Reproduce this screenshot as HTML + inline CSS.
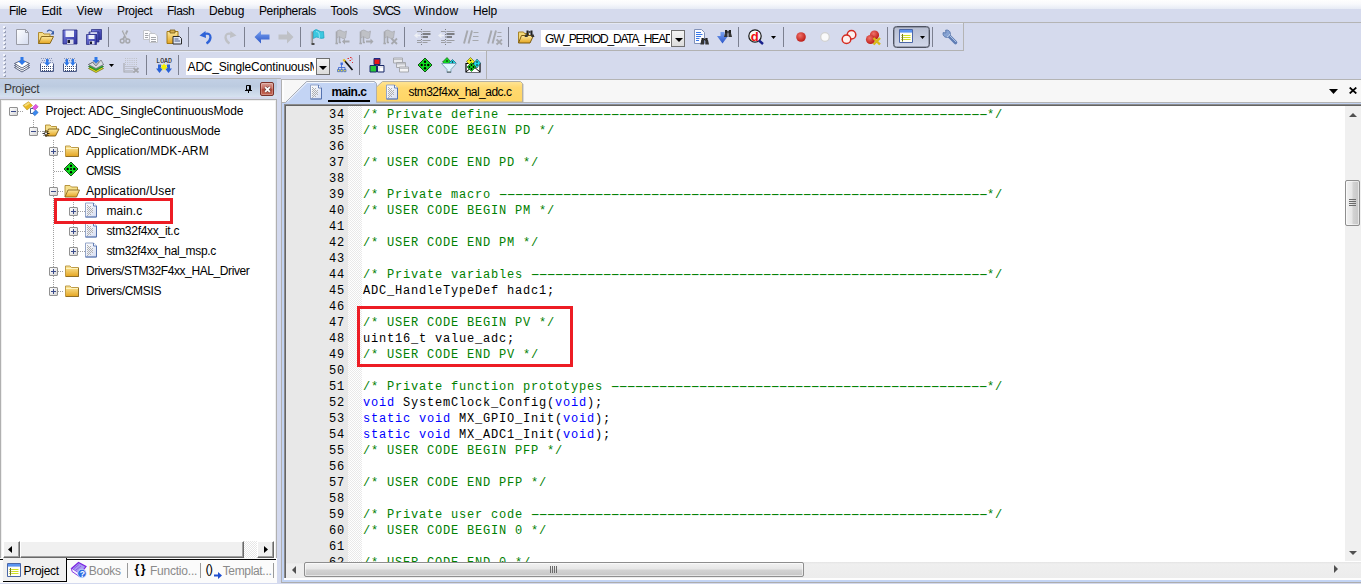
<!DOCTYPE html>
<html><head><meta charset="utf-8"><title>uVision</title>
<style>

html,body{margin:0;padding:0;}
body{width:1361px;height:584px;overflow:hidden;position:relative;background:#d5daed;font-family:'Liberation Sans',sans-serif;font-size:12px;}
div,span,svg{position:absolute;box-sizing:border-box;}
.t{white-space:pre;}
.clip{overflow:hidden;}
.sep{width:1px;background:#7c8090;}
.ic{width:16px;height:16px;overflow:visible;}
#code{font-family:'Liberation Mono',monospace;font-size:12px;letter-spacing:0.8px;line-height:16px;white-space:pre;color:#000;}
#code i{font-style:normal;color:#008000;}
#code b{font-weight:normal;color:#0000ff;}
#code .d{position:static;display:inline-block;margin-left:-3.2px;letter-spacing:-3.2px;transform:scaleX(2);transform-origin:0 50%;}
#lnum{font-family:'Liberation Mono',monospace;font-size:12px;letter-spacing:0.8px;line-height:16px;white-space:pre;color:#000;text-align:right;}
.exp{width:9px;height:9px;border:1px solid #919191;background:linear-gradient(135deg,#fff,#d6d6d6);border-radius:1px;}
.exp:before{content:"";position:absolute;left:1px;top:3px;width:5px;height:1px;background:#3a4a8a;}
.exp.p:after{content:"";position:absolute;left:3px;top:1px;width:1px;height:5px;background:#3a4a8a;}
.dot-h{height:1px;background-image:linear-gradient(90deg,#a0a0a0 50%,transparent 50%);background-size:2px 1px;}
.dot-v{width:1px;background-image:linear-gradient(180deg,#a0a0a0 50%,transparent 50%);background-size:1px 2px;}
.grip{width:3px;background-image:linear-gradient(180deg,#8f94a8 50%,transparent 50%);background-size:3px 4px;}

</style></head><body>
<svg style="width:0;height:0"><defs>
<linearGradient id="gFold" x1="0" y1="0" x2="0" y2="1"><stop offset="0" stop-color="#fbe9a0"/><stop offset="1" stop-color="#e5a520"/></linearGradient>
<linearGradient id="gPage" x1="0" y1="0" x2="1" y2="1"><stop offset="0" stop-color="#ffffff"/><stop offset="1" stop-color="#d5dcf0"/></linearGradient>
<linearGradient id="gDisk" x1="0" y1="0" x2="1" y2="1"><stop offset="0" stop-color="#7a7fe0"/><stop offset="1" stop-color="#2c2f9a"/></linearGradient>
<radialGradient id="gRed" cx="0.4" cy="0.35" r="0.7"><stop offset="0" stop-color="#f07068"/><stop offset="1" stop-color="#b81510"/></radialGradient>
<linearGradient id="gBlue" x1="0" y1="0" x2="0" y2="1"><stop offset="0" stop-color="#7aa2f0"/><stop offset="1" stop-color="#2a55c8"/></linearGradient>
</defs></svg>
<div style="left:0;top:0;width:1361px;height:22px;background:linear-gradient(180deg,#fefefe 0,#f8f9fc 4px,#e7ebf5 9px,#d5daed 9px,#d5daed 100%)"></div>
<div style="left:0;top:22px;width:1361px;height:1px;background:#b4b4b4"></div>
<div style="left:0;top:23px;width:964px;height:28px;border-bottom:1px solid #b2b2b2;border-right:1px solid #b4b4b4;background:#d5daed"></div>
<div style="left:0;top:23px;width:963px;height:1px;background:#e4e8f4"></div>
<div style="left:0;top:51px;width:487px;height:28px;border-right:1px solid #b2b2b2;background:#d5daed"></div>
<div style="left:0;top:51px;width:486px;height:1px;background:#e4e8f4"></div>
<div style="left:281px;top:79px;width:1080px;height:1px;background:#b4b4b4"></div>
<svg style="left:3px;top:26px;width:3px;height:23px" viewBox="0 0 3 23"><rect x="1" y="1" width="2" height="2" fill="#9aa1b8"/><rect x="0" y="0" width="2" height="2" fill="#f3f5fb"/><rect x="1" y="5" width="2" height="2" fill="#9aa1b8"/><rect x="0" y="4" width="2" height="2" fill="#f3f5fb"/><rect x="1" y="9" width="2" height="2" fill="#9aa1b8"/><rect x="0" y="8" width="2" height="2" fill="#f3f5fb"/><rect x="1" y="13" width="2" height="2" fill="#9aa1b8"/><rect x="0" y="12" width="2" height="2" fill="#f3f5fb"/><rect x="1" y="17" width="2" height="2" fill="#9aa1b8"/><rect x="0" y="16" width="2" height="2" fill="#f3f5fb"/><rect x="1" y="21" width="2" height="2" fill="#9aa1b8"/><rect x="0" y="20" width="2" height="2" fill="#f3f5fb"/></svg>
<svg style="left:3px;top:54px;width:3px;height:23px" viewBox="0 0 3 23"><rect x="1" y="1" width="2" height="2" fill="#9aa1b8"/><rect x="0" y="0" width="2" height="2" fill="#f3f5fb"/><rect x="1" y="5" width="2" height="2" fill="#9aa1b8"/><rect x="0" y="4" width="2" height="2" fill="#f3f5fb"/><rect x="1" y="9" width="2" height="2" fill="#9aa1b8"/><rect x="0" y="8" width="2" height="2" fill="#f3f5fb"/><rect x="1" y="13" width="2" height="2" fill="#9aa1b8"/><rect x="0" y="12" width="2" height="2" fill="#f3f5fb"/><rect x="1" y="17" width="2" height="2" fill="#9aa1b8"/><rect x="0" y="16" width="2" height="2" fill="#f3f5fb"/><rect x="1" y="21" width="2" height="2" fill="#9aa1b8"/><rect x="0" y="20" width="2" height="2" fill="#f3f5fb"/></svg>
<svg class="ic" style="left:14.5px;top:29.0px" viewBox="0 0 16 16"><path d="M1.5 0.5h9l3 3v12h-12z" fill="url(#gPage)" stroke="#9a9ca6"/><path d="M10.5 0.5v3h3" fill="none" stroke="#9a9ca6"/></svg>
<svg class="ic" style="left:38.0px;top:29.0px" viewBox="0 0 16 16"><path d="M0.5 14.5v-11h4l1.5 1.5h6v3" fill="#f6dc86" stroke="#b08a30"/><path d="M0.5 14.5l3-7h12l-3.5 7z" fill="url(#gFold)" stroke="#8a6a20"/><path d="M9 2.5q3.5-3 6 1" fill="none" stroke="#3a5fa8" stroke-width="1.2"/><path d="M16 1.5v4h-3.5z" fill="#3a5fa8"/></svg>
<svg class="ic" style="left:62.0px;top:29.0px" viewBox="0 0 16 16"><path d="M1 1h14v14h-14z" fill="url(#gDisk)" stroke="#23267a" stroke-width="0.8"/><path d="M3.5 1.5h8.5v6.5h-8.5z" fill="#eef0fa"/><path d="M5 10.5h6.5v4.5h-6.5z" fill="#d8dae8"/><path d="M5.5 11h2.5v3h-2.5z" fill="#1a1a30"/></svg>
<svg class="ic" style="left:86.0px;top:29.0px" viewBox="0 0 16 16"><path d="M5.5 0.5h10v10h-10z" fill="url(#gDisk)" stroke="#23267a" stroke-width="0.7"/><path d="M3 3h10v10h-10z" fill="url(#gDisk)" stroke="#23267a" stroke-width="0.7"/><path d="M4.5 3.3h6.5v1.5h-6.5z" fill="#eef0fa"/><path d="M0.5 5.5h10v10h-10z" fill="url(#gDisk)" stroke="#23267a" stroke-width="0.7"/><path d="M2.5 6h6v4h-6z" fill="#eef0fa"/><path d="M3.5 12h5v3.5h-5z" fill="#d8dae8"/><path d="M4 12.5h2v2.5h-2z" fill="#1a1a30"/></svg>
<svg class="ic" style="left:117.5px;top:29.0px" viewBox="0 0 16 16"><path d="M4.500 1.500l4.500 9M9.500 1.500l-4.500 9" stroke="#a6a8ad" stroke-width="1.800" fill="none"/><path d="M5.300 1.500l4 8" stroke="#eceef2" stroke-width="0.700" fill="none"/><circle cx="4.200" cy="12" r="1.900" fill="none" stroke="#a6a8ad" stroke-width="1.500"/><circle cx="9.800" cy="12" r="1.900" fill="none" stroke="#a6a8ad" stroke-width="1.500"/></svg>
<svg class="ic" style="left:143.0px;top:29.0px" viewBox="0 0 16 16"><path d="M0.500 1.500h5.500l2.500 2.500v6.500h-8z" fill="#fcfcfe" stroke="#c2c4ca"/><path d="M6.500 4.500h5.500l2.500 2.500v6.500h-8z" fill="#fcfcfe" stroke="#c2c4ca"/><path d="M2 4.500h3M2 6.500h3.500M2 8.500h3M8 8.500h5M8 10.500h5M8 12.500h5" stroke="#a4a6ab" stroke-width="1"/></svg>
<svg class="ic" style="left:166.0px;top:29.0px" viewBox="0 0 16 16"><path d="M1 2.500h11v12h-11z" fill="url(#gFold)" stroke="#a37a18"/><path d="M4 1h5v3h-5z" fill="#d8b050" stroke="#7a5a10" stroke-width="0.8"/><path d="M7 7.500h6.500l2 2v5.500h-8.500z" fill="#dfe6f5" stroke="#2a2a2a"/><path d="M8.500 10h4M8.500 12h5.500" stroke="#50608a" stroke-width="1"/></svg>
<svg class="ic" style="left:198.0px;top:29.0px" viewBox="0 0 16 16"><path d="M6.500 5q6-1.500 6 3.500q-0.500 4-4 6" fill="none" stroke="#2f63d8" stroke-width="2.300"/><path d="M1.500 6.500l6-4.500l0.500 7z" fill="#2f63d8"/></svg>
<svg class="ic" style="left:222.0px;top:29.0px" viewBox="0 0 16 16"><path d="M9.500 5q-6-1.500-6 3.500q0.500 4 4 6" fill="none" stroke="#bfc1c6" stroke-width="2.300"/><path d="M14.500 6.500l-6-4.500l-0.500 7z" fill="#bfc1c6"/></svg>
<svg class="ic" style="left:254.0px;top:29.0px" viewBox="0 0 16 16"><path d="M0.500 8l6.500-6.500v4h8.500v5h-8.500v4z" fill="url(#gBlue)"/></svg>
<svg class="ic" style="left:278.0px;top:29.0px" viewBox="0 0 16 16"><path d="M15.500 8l-6.500-6.500v4h-8.500v5h8.500v4z" fill="#bfc1c6"/></svg>
<svg class="ic" style="left:309.0px;top:29.0px" viewBox="0 0 16 16"><path d="M3 2.500v12" stroke="#8d8f94" stroke-width="2.200"/><path d="M2.300 2.500v12" stroke="#c9cbd0" stroke-width="0.700"/><path d="M4.500 2q2.500-2.500 5-0.500t5 1l0.500 6.500q-3 1-5.500-0.500t-5 1z" fill="#3cc8e0" stroke="#18a0bc" stroke-width="0.700"/><path d="M7 2.500q1.500 0 3 1.500l0.500 5" fill="none" stroke="#8fe4f2" stroke-width="1"/><path d="M2.500 14h3v2h-3z" fill="#4a4a4a"/></svg>
<svg class="ic" style="left:333.5px;top:29.0px" viewBox="0 0 16 16"><path d="M2.500 2.500v12.500M5.500 3v11" stroke="#a6a8ad" stroke-width="1.600"/><path d="M3 2q3-2 5 0t4.500 0l-1 7q-2.500 1.500-4.500-0.500t-4 0.500z" fill="#bfc1c6" stroke="#a6a8ad" stroke-width="0.700"/><path d="M1.500 14.500h2.500M5 13.500h2" stroke="#a6a8ad" stroke-width="1.500"/><path d="M8 12.500l3-3v2h4.500v2h-4.500v2z" fill="#a6a8ad"/></svg>
<svg class="ic" style="left:357.5px;top:29.0px" viewBox="0 0 16 16"><path d="M2.500 2.500v12.500M5.500 3v11" stroke="#a6a8ad" stroke-width="1.600"/><path d="M3 2q3-2 5 0t4.500 0l-1 7q-2.500 1.500-4.500-0.500t-4 0.500z" fill="#bfc1c6" stroke="#a6a8ad" stroke-width="0.700"/><path d="M1.500 14.500h2.500M5 13.500h2" stroke="#a6a8ad" stroke-width="1.500"/><path d="M15.500 12.500l-3-3v2h-4.500v2h4.500v2z" fill="#a6a8ad"/></svg>
<svg class="ic" style="left:382.0px;top:29.0px" viewBox="0 0 16 16"><path d="M2.500 2.500v12.500M5.500 3v11" stroke="#a6a8ad" stroke-width="1.600"/><path d="M3 2q3-2 5 0t4.500 0l-1 7q-2.500 1.500-4.500-0.500t-4 0.500z" fill="#bfc1c6" stroke="#a6a8ad" stroke-width="0.700"/><path d="M1.500 14.500h2.500M5 13.500h2" stroke="#a6a8ad" stroke-width="1.500"/><path d="M9.500 9.500l5.500 5.500M15 9.500l-5.500 5.500" stroke="#a6a8ad" stroke-width="1.800"/></svg>
<svg class="ic" style="left:414.5px;top:29.0px" viewBox="0 0 16 16"><path d="M7.500 2.500h8M7.500 11.500h8M2 2.500h4M2 11.500h4M2 13.500h4M7.500 13.500h5" stroke="#9c9ea3" stroke-width="1"/><path d="M7.500 5h8M7.500 8h5.500" stroke="#7d7f84" stroke-width="2"/><path d="M6.500 0v16" stroke="#7d7f84" stroke-width="1" stroke-dasharray="1 1.500"/><path d="M0 6.500l5 0M2.500 4.500l-2.500 2l2.500 2" stroke="#eef0f5" stroke-width="1.300" fill="none"/></svg>
<svg class="ic" style="left:439.0px;top:29.0px" viewBox="0 0 16 16"><path d="M7.500 2.500h8M7.500 11.500h8M2 2.500h4M2 11.500h4M2 13.500h4M7.500 13.500h5" stroke="#9c9ea3" stroke-width="1"/><path d="M7.500 5h8M7.500 8h5.500" stroke="#7d7f84" stroke-width="2"/><path d="M6.500 0v16" stroke="#7d7f84" stroke-width="1" stroke-dasharray="1 1.500"/><path d="M0 6.500l5 0M2.500 4.500l-2.500 2l2.500 2" stroke="#eef0f5" stroke-width="1.300" fill="none"/></svg>
<svg class="ic" style="left:462.5px;top:29.0px" viewBox="0 0 16 16"><path d="M4.500 1.500l-3.500 13M9 1.500l-3.500 13" stroke="#a6a8ad" stroke-width="1.900"/><path d="M10.500 3.500h5M10 7.500h5.500M9.500 11.500h6" stroke="#a6a8ad" stroke-width="1"/></svg>
<svg class="ic" style="left:487.0px;top:29.0px" viewBox="0 0 16 16"><path d="M4.500 1.500l-3.500 13M9 1.500l-3.500 13" stroke="#a6a8ad" stroke-width="1.900"/><path d="M10.500 3.500h4M10 7.500h4.500" stroke="#a6a8ad" stroke-width="1"/><path d="M9.500 10.500l5.500 5M15 10.500l-5.500 5" stroke="#a6a8ad" stroke-width="1.800"/></svg>
<svg class="ic" style="left:518.0px;top:29.0px" viewBox="0 0 16 16"><path d="M0.500 14v-11h5l1 1.500h4v3" fill="#f3d878" stroke="#a88428"/><path d="M0.500 14l3-7.500h12l-3.500 7.500z" fill="url(#gFold)" stroke="#7a5a14"/><path d="M8.500 1.500h2v5h-2zM12.500 1.500h2v5h-2z" fill="#222"/><path d="M8 4.500l-1.500 3.500h3.500zM15 4.500l1.500 3.500h-3.500z" fill="#333"/><path d="M10.500 3h2" stroke="#222" stroke-width="1.500"/></svg>
<svg class="ic" style="left:692.5px;top:29.0px" viewBox="0 0 16 16"><path d="M1.500 0.500h7l3 3v11h-10z" fill="#fbfcff" stroke="#8292b8"/><path d="M3 3.500h5M3 5.500h6.500M3 7.500h5M3 9.500h3.500M3 11.500h3" stroke="#3a78e8" stroke-width="1"/><path d="M8.500 9h2.300v3h-2.300zM12.300 9h2.300v3h-2.300z" fill="#222"/><path d="M7.300 15.500l1-4.500h2.700v4.500zM16 15.500l-1-4.500h-2.700v4.500z" fill="#333"/><path d="M10.500 10.500h2" stroke="#222" stroke-width="1.500"/></svg>
<svg class="ic" style="left:715.5px;top:29.0px" viewBox="0 0 16 16"><path d="M1 7h3.500v-4h4v4h3.500l-5.500 7.500z" fill="url(#gBlue)"/><path d="M9 1h2.200v4h-2.200zM12.800 1h2.200v4h-2.200z" fill="#222"/><path d="M8 8l1-4h2.500v4zM16 8l-1-4h-2.500v4z" fill="#333"/><path d="M11 3h2" stroke="#222" stroke-width="1.500"/></svg>
<svg class="ic" style="left:748.0px;top:29.0px" viewBox="0 0 16 16"><circle cx="7" cy="7" r="6.200" fill="#f8f8f8" stroke="#1a1a1a" stroke-width="1.200"/><path d="M11 11.500l4 3.500" stroke="#18208a" stroke-width="2.400"/><text x="2.800" y="11.500" font-family="Liberation Sans,sans-serif" font-weight="700" font-size="13" fill="#f01010">d</text></svg>
<svg class="ic" style="left:793.0px;top:29.0px" viewBox="0 0 16 16"><circle cx="8" cy="8" r="4.800" fill="url(#gRed)"/></svg>
<svg class="ic" style="left:817.0px;top:29.0px" viewBox="0 0 16 16"><circle cx="8" cy="8" r="4.300" fill="#fafafa" stroke="#d2d2d2" stroke-width="1.300"/></svg>
<svg class="ic" style="left:841.0px;top:29.0px" viewBox="0 0 16 16"><circle cx="10.500" cy="5.800" r="4.300" fill="#fdf0ee" stroke="#d42a20" stroke-width="1.500"/><circle cx="5.500" cy="10.300" r="4.300" fill="#fdf0ee" stroke="#d42a20" stroke-width="1.500"/></svg>
<svg class="ic" style="left:865.0px;top:29.0px" viewBox="0 0 16 16"><circle cx="9.500" cy="6" r="4.600" fill="url(#gRed)"/><circle cx="5.500" cy="10.500" r="4.600" fill="url(#gRed)"/><path d="M8.500 9l6.500 6.500M15 9l-6.500 6.500" stroke="#d8b818" stroke-width="2.400"/></svg>
<svg class="ic" style="left:941.7px;top:29.0px" viewBox="0 0 16 16"><path d="M6.800 6.800l6.700 6.700" stroke="#5f7db4" stroke-width="3.600" stroke-linecap="round"/><path d="M7.300 6.300l6.500 6.500" stroke="#a9c0e4" stroke-width="1" stroke-linecap="round"/><path d="M3.620 1.160A3.700 3.700 0 1 1 1.160 3.620L3.900 3.900Z" fill="#86a2d2" stroke="#4f6ea6" stroke-width="0.800"/><path d="M5 7.800a3.300 3.300 0 0 0 2.800-2.800" fill="none" stroke="#c8d8f0" stroke-width="0.800"/></svg>
<div class="sep" style="left:108px;top:27px;height:20px"></div>
<div class="sep" style="left:188px;top:27px;height:20px"></div>
<div class="sep" style="left:244px;top:27px;height:20px"></div>
<div class="sep" style="left:300px;top:27px;height:20px"></div>
<div class="sep" style="left:404px;top:27px;height:20px"></div>
<div class="sep" style="left:508px;top:27px;height:20px"></div>
<div class="sep" style="left:738px;top:27px;height:20px"></div>
<div class="sep" style="left:783px;top:27px;height:20px"></div>
<div class="sep" style="left:887px;top:27px;height:20px"></div>
<div class="sep" style="left:932px;top:27px;height:20px"></div>
<svg style="left:771.0px;top:36.0px;width:5px;height:3px" viewBox="0 0 5 3"><path d="M0 0h5L2.5 3z" fill="#000"/></svg>
<div style="left:893px;top:26px;width:37px;height:22px;border:1px solid #4f5462;border-radius:3.500px;box-shadow:inset 0 0 0 0.500px #6a6f7e;background:linear-gradient(180deg,#b6bdd1,#d2d8ea)"></div>
<svg class="ic" style="left:898.2px;top:28.3px" viewBox="0 0 16 16"><path d="M1.500 1.500h13v13h-13z" fill="#fffff4" stroke="#4a66a8"/><path d="M2 2h12v2.500h-12z" fill="#5a94f0"/><path d="M2 4.500h12" stroke="#9bbcf5" stroke-width="1"/><path d="M4.500 6v7.500" stroke="#6a7a10" stroke-width="1"/><path d="M3.500 7.500h2M3.500 9.500h2M3.500 11.500h2" stroke="#808a10" stroke-width="1"/><path d="M6 7.500h6.500M6 9.500h6.500M6 11.500h6.500" stroke="#d0e020" stroke-width="1"/></svg>
<svg style="left:920.0px;top:36.0px;width:5px;height:3px" viewBox="0 0 5 3"><path d="M0 0h5L2.5 3z" fill="#000"/></svg>
<div style="left:541px;top:30px;width:130px;height:17px;background:#fff"></div>
<div style="left:671px;top:30px;width:14px;height:17px;border:1px solid #707070;background:linear-gradient(180deg,#f4f4f4,#dcdcdc)"></div>
<svg style="left:674.5px;top:38.0px;width:8px;height:4px" viewBox="0 0 8 4"><path d="M0 0h8L4.0 4z" fill="#000"/></svg>
<svg class="ic" style="left:14.0px;top:57.0px" viewBox="0 0 16 16"><path d="M0.500 10.500l7.500-3.500l7.500 3.500l-7.500 4.500z" fill="#fff" stroke="#3a4563" stroke-width="0.800"/><path d="M0.500 8.500l7.500-3.500l7.500 3.500l-7.500 4.500z" fill="#fff" stroke="#3a4563" stroke-width="0.800"/><path d="M0.500 6.500l7.500-3.500l7.500 3.500l-7.500 4.500z" fill="#fff" stroke="#3a4563" stroke-width="0.800"/><path d="M6.500 0h3v4h2.500l-4 4l-4-4h2.500z" fill="#2f78e8"/></svg>
<svg class="ic" style="left:38.5px;top:57.0px" viewBox="0 0 16 16"><path d="M1.500 6.500v8h13v-8" fill="#fff" stroke="#4a5a88" stroke-width="1"/><path d="M2 7h12v7h-12z" fill="#fff"/><path d="M3 9.500h10.500M3 11.500h10.500M3 13.500h10.500" stroke="#3c4a70" stroke-width="1" stroke-dasharray="1 1"/><path d="M2 1.500h12M3 3.500h10.500M2 5.500h3M11 5.500h3" stroke="#8a96b8" stroke-width="1" stroke-dasharray="1 1"/><path d="M7 2h2.500v3.500h2l-3.200 3.500l-3.300-3.500h2z" fill="#2f78e8"/></svg>
<svg class="ic" style="left:62.0px;top:57.0px" viewBox="0 0 16 16"><path d="M1.500 6.500v8h13v-8" fill="#fff" stroke="#4a5a88" stroke-width="1"/><path d="M2 7h12v7h-12z" fill="#fff"/><path d="M3 9.500h10.500M3 11.500h10.500M3 13.500h10.500" stroke="#3c4a70" stroke-width="1" stroke-dasharray="1 1"/><path d="M2 1.500h12M3 3.500h10.500M2 5.500h3M11 5.500h3" stroke="#8a96b8" stroke-width="1" stroke-dasharray="1 1"/><path d="M3.700 2h2.300v3.500h1.500l-2.700 3.500l-2.600-3.500h1.500zM9.700 2h2.300v3.500h1.500l-2.700 3.500l-2.600-3.500h1.500z" fill="#2f78e8"/></svg>
<svg class="ic" style="left:88.0px;top:57.0px" viewBox="0 0 16 16"><path d="M0.500 11.500l7.500-4l7.500 4l-7.500 4z" fill="#e8e020" stroke="#6a6a10" stroke-width="0.700"/><path d="M0.500 9.500l7.500-4l7.500 4l-7.500 4z" fill="#38b838" stroke="#1a6a1a" stroke-width="0.700"/><path d="M0.500 7.500l7.500-4l7.500 4l-7.500 4z" fill="#b8bcc4" stroke="#5a5e68" stroke-width="0.700"/><path d="M0.500 7.500l4-2l3.500 3.500l5-6l2.500 4.500l-7.500 4z" fill="#d9dce2" stroke="#5a5e68" stroke-width="0.600"/><path d="M6.500 0h3v3h2l-3.500 3.500l-3.500-3.500h2z" fill="#2f78e8"/></svg>
<svg class="ic" style="left:123.0px;top:57.0px" viewBox="0 0 16 16"><path d="M1 6v9h10" fill="none" stroke="#a6a8ad" stroke-width="1.100"/><path d="M2.500 9.500h11M2.500 11.500h8M2.500 13.500h8" stroke="#a6a8ad" stroke-width="1" stroke-dasharray="1 1"/><path d="M2 1.500h12M2 3.500h12M2 5.500h12M2 7.500h12" stroke="#bfc1c6" stroke-width="1" stroke-dasharray="1 1.200"/><path d="M10.500 11l5 4.500M15.500 11l-5 4.500" stroke="#a6a8ad" stroke-width="1.800"/></svg>
<svg class="ic" style="left:155.5px;top:57.0px" viewBox="0 0 16 16"><text x="0.300" y="5.600" font-family="Liberation Mono,monospace" font-size="6.500" fill="#000" textLength="15.500" lengthAdjust="spacingAndGlyphs">LOAD</text><path d="M2 7.500h3v4h2l-3.500 4.500l-3.500-4.500h2zM11 7.500h3v4h2l-3.500 4.500l-3.500-4.500h2z" fill="#2a62d8"/><path d="M8 6l1 2.200l2.300-0.700l-1.200 2l1.800 1.500l-2.300 0.300l-0.100 2.400l-1.500-1.800l-1.500 1.800l-0.100-2.400l-2.300-0.300l1.800-1.500l-1.200-2l2.300 0.700z" fill="#f4f000"/></svg>
<svg class="ic" style="left:337.0px;top:57.0px" viewBox="0 0 16 16"><path d="M7 3l8.500 10" stroke="#111" stroke-width="1.700"/><path d="M6.300 2.300l1.800 2.100" stroke="#e8c020" stroke-width="2"/><path d="M10.500 1.500h1.500M13 0.500h1.500M12.500 3.500h1.500M15 5.500h1M14.500 2h1" stroke="#e03030" stroke-width="1"/><path d="M4.500 7v3.500M1.500 13v-2.500h6.500v2.500M4.700 10.500v2.500" fill="none" stroke="#3060d0" stroke-width="0.800"/><path d="M3.500 5.500h2.400v2.400h-2.400z" fill="#3a6ae0"/><path d="M0.500 12.500h2.200v2.200h-2.200zM3.600 12.500h2.200v2.200h-2.200zM6.800 12.500h2.200v2.200h-2.200z" fill="#f0e040" stroke="#3060d0" stroke-width="0.700"/></svg>
<svg class="ic" style="left:369.0px;top:57.0px" viewBox="0 0 16 16"><path d="M5 1.500h6v6h-6z" fill="#e81818" stroke="#1a2a6a"/><path d="M5.500 1h5v1.500h-5z" fill="#1a2a8a"/><path d="M1 8.500h6.500v6.500h-6.500z" fill="#28c838" stroke="#1a2a6a"/><path d="M8.500 8.500h6.500v6.500h-6.500z" fill="#e8e8ee" stroke="#1a2a6a"/><path d="M11 11h3v3h-3z" fill="#fff"/></svg>
<svg class="ic" style="left:393.0px;top:57.0px" viewBox="0 0 16 16"><path d="M0.500 1h9v5h-9z" fill="#e9eaee" stroke="#a6a8ad"/><path d="M1 1.500h8v1.500h-8z" fill="#bfc1c6"/><path d="M3.500 5.500h9v5h-9z" fill="#e9eaee" stroke="#a6a8ad"/><path d="M4 6h8v1.500h-8z" fill="#bfc1c6"/><path d="M6.500 10h9v5h-9z" fill="#f4f4f6" stroke="#a6a8ad"/><path d="M7 10.500h8v1.500h-8z" fill="#bfc1c6"/></svg>
<svg class="ic" style="left:416.5px;top:57.0px" viewBox="0 0 16 16"><path d="M8 1l7 7l-7 7l-7-7z" fill="#10e020" stroke="#0a3a0a" stroke-width="0.900"/><circle cx="8" cy="4.700" r="1.200"/><circle cx="8" cy="11.300" r="1.200"/><circle cx="4.700" cy="8" r="1.200"/><circle cx="11.300" cy="8" r="1.200"/><circle cx="8" cy="8" r="1"/></svg>
<svg class="ic" style="left:441.0px;top:57.0px" viewBox="0 0 16 16"><path d="M6 0.500l4 4.500l-4 4l-4.500-4z" fill="#10d820" stroke="#0a4a0a" stroke-width="0.600"/><path d="M11.500 2.500l3.500 3.500l-3.500 3.500l-3.500-3.500z" fill="#20e0f0" stroke="#0a4a5a" stroke-width="0.600"/><circle cx="6" cy="4" r="0.800"/><circle cx="11.500" cy="5" r="0.800"/><path d="M0.500 6.500h15l-5.500 6v3h-4v-3z" fill="#dff4fc" stroke="#7aa0b8" stroke-width="0.900"/><path d="M6 15h4" stroke="#555" stroke-width="1"/></svg>
<svg class="ic" style="left:465.0px;top:57.0px" viewBox="0 0 16 16"><path d="M1 6.500h14v8.500h-14z" fill="#fff" stroke="#000" stroke-width="1.200"/><path d="M1 15l7-6l7 6" fill="#fff" stroke="#000" stroke-width="1"/><path d="M5.500 0.500l4 4l-4 4l-4-4z" fill="#f0f020" stroke="#55550a" stroke-width="0.600"/><path d="M12 2l3.500 4l-3.500 5l-3.500-4z" fill="#20e0f0" stroke="#0a4a5a" stroke-width="0.600"/><path d="M6.500 5.500l4.500 4.500l-4.500 4.500l-4.500-4.500z" fill="#10d820" stroke="#0a4a0a" stroke-width="0.600"/><circle cx="5.500" cy="3.500" r="0.800"/><circle cx="12" cy="5" r="0.800"/><circle cx="12" cy="8" r="0.800"/><circle cx="6.500" cy="8" r="0.900"/><circle cx="6.500" cy="12" r="0.900"/><circle cx="4.500" cy="10" r="0.900"/><circle cx="8.500" cy="10" r="0.900"/></svg>
<svg style="left:109.0px;top:64.0px;width:5px;height:3px" viewBox="0 0 5 3"><path d="M0 0h5L2.5 3z" fill="#000"/></svg>
<div class="sep" style="left:146px;top:55px;height:20px"></div>
<div class="sep" style="left:178px;top:55px;height:20px"></div>
<div class="sep" style="left:359px;top:55px;height:20px"></div>
<div style="left:186px;top:58px;width:131px;height:17px;background:#fff"></div>
<div style="left:316px;top:58px;width:14px;height:17px;border:1px solid #707070;background:linear-gradient(180deg,#f4f4f4,#dcdcdc)"></div>
<svg style="left:319.0px;top:66.0px;width:8px;height:4px" viewBox="0 0 8 4"><path d="M0 0h8L4.0 4z" fill="#000"/></svg>
<div style="left:0;top:78px;width:281px;height:1px;background:#b4b4b4"></div>
<div style="left:0;top:79px;width:277px;height:18px;background:linear-gradient(180deg,#c2d0e5 0,#bccbe0 40%,#d6e2ef 100%)"></div>
<div style="left:0;top:99px;width:277px;height:460px;background:#fff;border-left:1px solid #b0b0b0;border-top:1px solid #b0b0b0;border-right:1px solid #b0b0b0"></div>
<div style="left:1px;top:100px;width:275px;height:459px;border-left:1px solid #efefef;border-top:1px solid #efefef;border-right:1px solid #efefef"></div>
<svg style="left:245px;top:85px;width:7px;height:8px" viewBox="0 0 7 8"><path d="M1.500 0.500h4v4.500h-4zM4.500 0.500v4.500M0 5.500h7M3.500 6v2" fill="none" stroke="#000" stroke-width="1"/></svg>
<div style="left:260px;top:82px;width:14px;height:14px;border:1px solid #7c3129;border-radius:2px;background:linear-gradient(180deg,#d9a097 0,#c4685c 45%,#b04638 50%,#c46a58 100%);box-shadow:inset 0 0 0 1px rgba(255,255,255,.25)"></div>
<svg style="left:263.500px;top:85.500px;width:7px;height:7px" viewBox="0 0 7 7"><path d="M1.200 1.200l4.600 4.600M5.800 1.200l-4.600 4.600" stroke="#6a4a48" stroke-width="3"/><path d="M1.200 1.200l4.600 4.600M5.800 1.200l-4.600 4.600" stroke="#fff" stroke-width="1.700"/></svg>
<div style="left:277px;top:79px;width:4px;height:505px;background:#d3d9ee"></div>
<div style="left:281px;top:79px;width:1px;height:505px;background:#b0b0b0"></div>
<div style="left:282px;top:80px;width:2px;height:23px;background:#fdfdfd"></div>
<div style="left:282px;top:103px;width:2px;height:481px;background:#c3d4f4"></div>
<div class="dot-h" style="left:18px;top:111px;width:6px"></div>
<div class="dot-v" style="left:33px;top:120px;height:7px"></div>
<div class="dot-h" style="left:38px;top:131px;width:6px"></div>
<div class="dot-v" style="left:53px;top:140px;height:147px"></div>
<div class="dot-h" style="left:58px;top:151px;width:6px"></div>
<div class="dot-h" style="left:54px;top:171px;width:10px"></div>
<div class="dot-h" style="left:58px;top:191px;width:6px"></div>
<div class="dot-h" style="left:58px;top:271px;width:6px"></div>
<div class="dot-h" style="left:58px;top:291px;width:6px"></div>
<div class="dot-v" style="left:73px;top:200px;height:47px"></div>
<div class="dot-h" style="left:78px;top:211px;width:8px"></div>
<div class="dot-h" style="left:78px;top:231px;width:8px"></div>
<div class="dot-h" style="left:78px;top:251px;width:8px"></div>
<div class="exp" style="left:9px;top:107px"></div>
<div class="exp" style="left:29px;top:127px"></div>
<div class="exp p" style="left:49px;top:147px"></div>
<div class="exp" style="left:49px;top:187px"></div>
<div class="exp p" style="left:69px;top:207px"></div>
<div class="exp p" style="left:69px;top:227px"></div>
<div class="exp p" style="left:69px;top:247px"></div>
<div class="exp p" style="left:49px;top:267px"></div>
<div class="exp p" style="left:49px;top:287px"></div>
<svg class="ic" style="left:23.0px;top:102.0px" viewBox="0 0 16 16"><path d="M0 3.500l5.500-3.800l4 3.800l-5.500 4.500z" fill="#e9b824" stroke="#a98410" stroke-width="0.500"/><path d="M1 3.300l4.500-3l1.500 1.300l-4.500 3z" fill="#f6dc7a"/><path d="M9.300 5.800l3.500-3.500l2.400 2.500l-3.400 3.500z" fill="#e458e4" stroke="#a030a0" stroke-width="0.500"/><path d="M9.300 11.300l3.500-3.300l2.400 2.500l-3.400 3.300z" fill="#3a8af0" stroke="#1a55b0" stroke-width="0.500"/><path d="M10 6.500h-2.500v5h2.500" fill="none" stroke="#4a5f8a" stroke-width="1"/></svg>
<svg class="ic" style="left:43.0px;top:123.0px" viewBox="0 0 16 16"><path d="M2.500 13v-11h4.500l1.500 1.500h5v3" fill="#f6e08c" stroke="#b08a30" stroke-width="0.900"/><path d="M2.500 13l3-7h10.500l-3.500 7z" fill="url(#gFold)" stroke="#7a5a14" stroke-width="0.900"/><path d="M-0.500 10.500h7M3 7v7M0.500 8l5 5M5.500 8l-5 5" stroke="#000" stroke-width="0.800"/><circle cx="3" cy="10.500" r="1" fill="#fff"/></svg>
<svg class="ic" style="left:63.5px;top:142.5px" viewBox="0 0 16 16"><path d="M1.500 13.500v-10.500h4.500l1.500 1.500h7v9z" fill="url(#gFold)" stroke="#b8923a" stroke-width="0.900"/><path d="M2 5.500h12" stroke="#fdf3c0" stroke-width="1"/><path d="M14.500 5v8.500h-12.500" fill="none" stroke="#8c6a20" stroke-width="0.900"/></svg>
<svg class="ic" style="left:62.7px;top:160.7px" viewBox="0 0 16 16"><path d="M8 1l7 7l-7 7l-7-7z" fill="#10e020" stroke="#0a3a0a" stroke-width="0.900"/><circle cx="8" cy="4.700" r="1.200"/><circle cx="8" cy="11.300" r="1.200"/><circle cx="4.700" cy="8" r="1.200"/><circle cx="11.300" cy="8" r="1.200"/><circle cx="8" cy="8" r="1"/></svg>
<svg class="ic" style="left:63.5px;top:182.5px" viewBox="0 0 16 16"><path d="M1 14v-11.500h5l1.500 1.500h6v3" fill="#f6e08c" stroke="#b08a30" stroke-width="0.900"/><path d="M1 14l3-7h11.500l-3 7z" fill="url(#gFold)" stroke="#8a6a20" stroke-width="0.900"/></svg>
<svg class="ic" style="left:83.0px;top:201.5px" viewBox="0 0 16 16"><path d="M2.500 1h8l3 3v11h-11z" fill="url(#gPage)" stroke="#93a4c8"/><path d="M13.500 4v11h-11" fill="none" stroke="#5573b0"/><path d="M10.500 1v3h3" fill="#fff" stroke="#5573b0" stroke-width="0.900"/><path d="M4 3.500h2M5 4.500h3M4 5.500h4M5 6.500h5M4 7.500h6M5 8.500h6M4 9.500h6M5 10.500h5M4 11.500h4M5 12.500h3M4 13.500h2" stroke="#b0b0b0" stroke-width="1" stroke-dasharray="1 1"/></svg>
<svg class="ic" style="left:83.0px;top:221.5px" viewBox="0 0 16 16"><path d="M2.500 1h8l3 3v11h-11z" fill="url(#gPage)" stroke="#93a4c8"/><path d="M13.500 4v11h-11" fill="none" stroke="#5573b0"/><path d="M10.500 1v3h3" fill="#fff" stroke="#5573b0" stroke-width="0.900"/><path d="M4 3.500h2M5 4.500h3M4 5.500h4M5 6.500h5M4 7.500h6M5 8.500h6M4 9.500h6M5 10.500h5M4 11.500h4M5 12.500h3M4 13.500h2" stroke="#b0b0b0" stroke-width="1" stroke-dasharray="1 1"/></svg>
<svg class="ic" style="left:83.0px;top:241.5px" viewBox="0 0 16 16"><path d="M2.500 1h8l3 3v11h-11z" fill="url(#gPage)" stroke="#93a4c8"/><path d="M13.500 4v11h-11" fill="none" stroke="#5573b0"/><path d="M10.500 1v3h3" fill="#fff" stroke="#5573b0" stroke-width="0.900"/><path d="M4 3.500h2M5 4.500h3M4 5.500h4M5 6.500h5M4 7.500h6M5 8.500h6M4 9.500h6M5 10.500h5M4 11.500h4M5 12.500h3M4 13.500h2" stroke="#b0b0b0" stroke-width="1" stroke-dasharray="1 1"/></svg>
<svg class="ic" style="left:63.5px;top:262.5px" viewBox="0 0 16 16"><path d="M1.500 13.500v-10.500h4.500l1.500 1.500h7v9z" fill="url(#gFold)" stroke="#b8923a" stroke-width="0.900"/><path d="M2 5.500h12" stroke="#fdf3c0" stroke-width="1"/><path d="M14.500 5v8.500h-12.500" fill="none" stroke="#8c6a20" stroke-width="0.900"/></svg>
<svg class="ic" style="left:63.5px;top:282.5px" viewBox="0 0 16 16"><path d="M1.500 13.500v-10.500h4.500l1.500 1.500h7v9z" fill="url(#gFold)" stroke="#b8923a" stroke-width="0.900"/><path d="M2 5.500h12" stroke="#fdf3c0" stroke-width="1"/><path d="M14.500 5v8.500h-12.500" fill="none" stroke="#8c6a20" stroke-width="0.900"/></svg>
<div style="left:54px;top:198px;width:118.5px;height:26px;border:3px solid #ed1c24"></div>
<div style="left:3px;top:541px;width:271px;height:17px;background:#f4f4f4"></div>
<div style="left:244px;top:541px;width:13px;height:17px;background-image:conic-gradient(#fff 25%,#e6e6e6 0 50%,#fff 0 75%,#e6e6e6 0);background-size:2px 2px"></div>
<div style="left:3px;top:541px;width:17px;height:17px;background:#f0f0f0;border-top:1px solid #fff;border-left:1px solid #fff;border-right:1px solid #696969;border-bottom:1px solid #696969;box-shadow:inset -1px -1px 0 #a0a0a0"></div>
<svg style="left:8px;top:546px;width:4px;height:7px" viewBox="0 0 4 7"><path d="M4 0v7L0 3.5z"/></svg>
<div style="left:20px;top:541px;width:224px;height:17px;background:#f0f0f0;border-top:1px solid #fff;border-left:1px solid #fff;border-right:1px solid #696969;border-bottom:1px solid #696969;box-shadow:inset -1px -1px 0 #a0a0a0"></div>
<div style="left:257px;top:541px;width:17px;height:17px;background:#f0f0f0;border-top:1px solid #fff;border-left:1px solid #fff;border-right:1px solid #696969;border-bottom:1px solid #696969;box-shadow:inset -1px -1px 0 #a0a0a0"></div>
<svg style="left:264px;top:546px;width:4px;height:7px" viewBox="0 0 4 7"><path d="M0 0v7L4 3.5z"/></svg>
<div style="left:0;top:558px;width:277px;height:24.500px;background:#fbfbfb"></div>
<div style="left:0;top:559px;width:3px;height:1px;background:#000"></div>
<div style="left:66px;top:559px;width:210px;height:1px;background:#000"></div>
<div style="left:3px;top:558px;width:64px;height:23.500px;background:#f0f0f0;border-right:1px solid #000;border-bottom:1px solid #000"></div>
<div style="left:127px;top:563px;width:1px;height:15px;background:#9a9a9a"></div>
<div style="left:200px;top:563px;width:1px;height:15px;background:#9a9a9a"></div>
<div style="left:273px;top:563px;width:1px;height:15px;background:#9a9a9a"></div>
<svg class="ic" style="left:6.0px;top:561.5px" viewBox="0 0 16 16"><path d="M1.500 1.500h13v13h-13z" fill="#fffff4" stroke="#4a66a8"/><path d="M2 2h12v2.500h-12z" fill="#5a94f0"/><path d="M2 4.500h12" stroke="#9bbcf5" stroke-width="1"/><path d="M4.500 6v7.500" stroke="#6a7a10" stroke-width="1"/><path d="M3.500 7.500h2M3.500 9.500h2M3.500 11.500h2" stroke="#808a10" stroke-width="1"/><path d="M6 7.500h6.500M6 9.500h6.500M6 11.500h6.500" stroke="#d0e020" stroke-width="1"/></svg>
<svg class="ic" style="left:71.0px;top:562.0px" viewBox="0 0 16 16"><path d="M0.500 6.500l7-6l7.500 4l-6 8z" fill="#a69af0" stroke="#7a22e0" stroke-width="1.200"/><path d="M0.500 6.500l0.500 3l8 5.500l0.500-2.500" fill="#f4f2ff" stroke="#7a22e0" stroke-width="0.900"/><path d="M3 6.500l5-4M5 8l5-4" stroke="#8a4ae8" stroke-width="0.800"/><circle cx="11" cy="11.500" r="4.300" fill="#2f6fe4" stroke="#dfe8ff" stroke-width="0.800"/><text x="8.700" y="14.600" font-family="Liberation Sans,sans-serif" font-weight="700" font-size="8.500" fill="#fff">?</text></svg>
<span class="t" style="left:134.500px;top:561px;line-height:16px;font-size:12.500px;font-weight:700;letter-spacing:1.500px">{}</span>
<span class="t" style="left:205.500px;top:561px;line-height:16px;font-size:12.500px;font-weight:400;letter-spacing:-0.800px">()</span>
<svg style="left:214px;top:572px;width:8px;height:7px" viewBox="0 0 8 7"><path d="M0 2.5h4V0l4 3.5L4 7V4.5H0z" fill="#1f4fd0"/></svg>
<div style="left:284px;top:80px;width:1077px;height:22px;background:#f7f7f7"></div>
<div style="left:282px;top:102px;width:1079px;height:1px;background:#b4b4b4"></div>
<div style="left:282px;top:103px;width:1079px;height:1px;background:#c3d4f4"></div>
<div style="left:282px;top:102px;width:4px;height:1px;background:#b0b0b0"></div>
<svg style="left:282px;top:80px;width:100px;height:24px" viewBox="0 0 100 24"><path d="M3.500 22.500 L24.500 1.500 L92.500 1.500 L94.500 3.500 L94.500 24 L3.500 24 Z" fill="#c3d4f4"/><path d="M3.500 22.500 L24.500 1.500 L92.500 1.500 L94.500 3.500 L94.500 22.500" fill="none" stroke="#a9adb6" stroke-width="1"/><path d="M5.500 21.700 L25 2.500 L92 2.500" fill="none" stroke="#f4f7fd" stroke-width="1"/></svg>
<svg class="ic" style="left:308.0px;top:83.5px" viewBox="0 0 16 16"><path d="M2.500 1h8l3 3v11h-11z" fill="url(#gPage)" stroke="#93a4c8"/><path d="M13.500 4v11h-11" fill="none" stroke="#5573b0"/><path d="M10.500 1v3h3" fill="#fff" stroke="#5573b0" stroke-width="0.900"/><path d="M4 3.500h2M5 4.500h3M4 5.500h4M5 6.500h5M4 7.500h6M5 8.500h6M4 9.500h6M5 10.500h5M4 11.500h4M5 12.500h3M4 13.500h2" stroke="#b0b0b0" stroke-width="1" stroke-dasharray="1 1"/></svg>
<div style="left:328px;top:100px;width:42px;height:2px;background:#000"></div>
<svg style="left:376px;top:80px;width:150px;height:23px" viewBox="0 0 150 23"><defs><linearGradient id="gTab" x1="0" y1="0" x2="0" y2="1"><stop offset="0" stop-color="#ffe596"/><stop offset="0.300" stop-color="#ffd970"/><stop offset="1" stop-color="#ffd565"/></linearGradient></defs><path d="M0.500 22 L0.500 7 L6.500 1.500 L144.500 1.500 L146.500 3.500 L146.500 22 Z" fill="url(#gTab)" stroke="#b4b0a4" stroke-width="1"/><path d="M147.500 4v18" stroke="#d8d8d8" stroke-width="1"/></svg>
<svg class="ic" style="left:384.0px;top:83.5px" viewBox="0 0 16 16"><path d="M2.500 1h8l3 3v11h-11z" fill="url(#gPage)" stroke="#93a4c8"/><path d="M13.500 4v11h-11" fill="none" stroke="#5573b0"/><path d="M10.500 1v3h3" fill="#fff" stroke="#5573b0" stroke-width="0.900"/><path d="M4 3.500h2M5 4.500h3M4 5.500h4M5 6.500h5M4 7.500h6M5 8.500h6M4 9.500h6M5 10.500h5M4 11.500h4M5 12.500h3M4 13.500h2" stroke="#b0b0b0" stroke-width="1" stroke-dasharray="1 1"/></svg>
<svg style="left:1329px;top:89px;width:9px;height:5px" viewBox="0 0 9 5"><path d="M0 0h9L4.5 5z"/></svg>
<svg style="left:1349px;top:87px;width:8px;height:7px" viewBox="0 0 8 7"><path d="M0.700 0.500l6.600 6M7.300 0.500l-6.600 6" stroke="#000" stroke-width="1.700"/></svg>
<div style="left:284px;top:104px;width:1077px;height:474px;background:#fff;border-left:1px solid #8c8c8c;border-top:1px solid #8c8c8c"></div>
<div style="left:285px;top:105px;width:1076px;height:473px;border-left:1px solid #646464;border-top:1px solid #646464"></div>
<div style="left:286px;top:106px;width:62px;height:456px;background:#e8e8e8"></div>
<div style="left:348px;top:106px;width:14px;height:456px;background-image:conic-gradient(#fff 25%,#e9e9e9 0 50%,#fff 0 75%,#e9e9e9 0);background-size:2px 2px"></div>
<div class="clip" style="left:286px;top:106px;width:1059px;height:456px">
<div id="lnum" style="left:0;top:1px;width:59px">34
35
36
37
38
39
40
41
42
43
44
45
46
47
48
49
50
51
52
53
54
55
56
57
58
59
60
61
62</div>
<div id="code" style="left:77px;top:1px"><i>/* Private define <span class="d" style="margin-right:243.2px">------------------------------------------------------------</span>*/</i>
<i>/* USER CODE BEGIN PD */</i>

<i>/* USER CODE END PD */</i>

<i>/* Private macro <span class="d" style="margin-right:247.2px">-------------------------------------------------------------</span>*/</i>
<i>/* USER CODE BEGIN PM */</i>

<i>/* USER CODE END PM */</i>

<i>/* Private variables <span class="d" style="margin-right:231.2px">---------------------------------------------------------</span>*/</i>
ADC_HandleTypeDef hadc1;

<i>/* USER CODE BEGIN PV */</i>
uint16_t value_adc;
<i>/* USER CODE END PV */</i>

<i>/* Private function prototypes <span class="d" style="margin-right:191.2px">-----------------------------------------------</span>*/</i>
<b>void</b> SystemClock_Config(<b>void</b>);
<b>static</b> <b>void</b> MX_GPIO_Init(<b>void</b>);
<b>static</b> <b>void</b> MX_ADC1_Init(<b>void</b>);
<i>/* USER CODE BEGIN PFP */</i>

<i>/* USER CODE END PFP */</i>

<i>/* Private user code <span class="d" style="margin-right:231.2px">---------------------------------------------------------</span>*/</i>
<i>/* USER CODE BEGIN 0 */</i>

<i>/* USER CODE END 0 */</i></div>
</div>
<div style="left:357px;top:306px;width:216px;height:60.5px;border:3px solid #ed1c24"></div>
<div style="left:1345px;top:106px;width:16px;height:455px;background:#f0f0f0"></div>
<svg style="left:1349px;top:113px;width:8px;height:4px" viewBox="0 0 8 4"><path d="M0 4h8L4 0z" fill="#505050"/></svg>
<svg style="left:1349px;top:551px;width:8px;height:4px" viewBox="0 0 8 4"><path d="M0 0h8L4 4z" fill="#505050"/></svg>
<div style="left:1345px;top:180px;width:15px;height:46px;border:1px solid #8e8e8e;border-radius:2px;background:linear-gradient(90deg,#f2f2f2 0,#e6e6e6 48%,#d3d3d3 52%,#c6c6c6 100%);box-shadow:inset 0 0 0 1px rgba(255,255,255,.55)"></div>
<div style="left:1349px;top:199px;width:7px;height:7px;background-image:linear-gradient(180deg,#6a6a6a 50%,transparent 50%);background-size:7px 2px"></div>
<div style="left:286px;top:562px;width:1075px;height:16px;background:linear-gradient(180deg,#e4e4e4 0,#efefef 2px,#ececec 100%)"></div>
<svg style="left:292px;top:566px;width:4px;height:8px" viewBox="0 0 4 8"><path d="M4 0v8L0 4z" fill="#505050"/></svg>
<svg style="left:1334px;top:565px;width:4px;height:8px" viewBox="0 0 4 8"><path d="M0 0v8L4 4z" fill="#505050"/></svg>
<div style="left:304px;top:562px;width:500px;height:15px;border:1px solid #8e8e8e;border-radius:2px;background:linear-gradient(180deg,#f2f2f2 0,#e6e6e6 48%,#d3d3d3 52%,#c6c6c6 100%);box-shadow:inset 0 0 0 1px rgba(255,255,255,.55)"></div>
<div style="left:550px;top:566px;width:7px;height:7px;background-image:linear-gradient(90deg,#6a6a6a 50%,transparent 50%);background-size:2px 7px"></div>
<div style="left:284px;top:578px;width:1077px;height:2px;background:#fdfdfd"></div>
<div style="left:282px;top:580px;width:1079px;height:2px;background:#c3d4f4"></div>
<div style="left:281px;top:582px;width:1080px;height:1px;background:#adadad"></div>
<div style="left:0px;top:583px;width:1361px;height:1px;background:#d3d9ee"></div>
<span class="t" style="left:8.90px;top:2.50px;line-height:16px;font-size:12px;letter-spacing:-0.461px;color:#000;">File</span>
<span class="t" style="left:41.40px;top:2.50px;line-height:16px;font-size:12px;letter-spacing:-0.047px;color:#000;">Edit</span>
<span class="t" style="left:76.40px;top:2.50px;line-height:16px;font-size:12px;letter-spacing:0.051px;color:#000;">View</span>
<span class="t" style="left:116.90px;top:2.50px;line-height:16px;font-size:12px;letter-spacing:-0.266px;color:#000;">Project</span>
<span class="t" style="left:166.90px;top:2.50px;line-height:16px;font-size:12px;letter-spacing:-0.369px;color:#000;">Flash</span>
<span class="t" style="left:208.90px;top:2.50px;line-height:16px;font-size:12px;letter-spacing:0.025px;color:#000;">Debug</span>
<span class="t" style="left:258.90px;top:2.50px;line-height:16px;font-size:12px;letter-spacing:-0.337px;color:#000;">Peripherals</span>
<span class="t" style="left:330.40px;top:2.50px;line-height:16px;font-size:12px;letter-spacing:-0.103px;color:#000;">Tools</span>
<span class="t" style="left:372.40px;top:2.50px;line-height:16px;font-size:12px;letter-spacing:-1.422px;color:#000;">SVCS</span>
<span class="t" style="left:413.90px;top:2.50px;line-height:16px;font-size:12px;letter-spacing:0.302px;color:#000;">Window</span>
<span class="t" style="left:472.90px;top:2.50px;line-height:16px;font-size:12px;letter-spacing:-0.172px;color:#000;">Help</span>
<div class="clip" style="left:541.0px;top:30.50px;width:129.0px;height:16px"><span class="t" style="left:4.00px;top:0;line-height:16px;font-size:12px;letter-spacing:-1.203px;color:#000">GW_PERIOD_DATA_HEAD</span></div>
<div class="clip" style="left:186.0px;top:59.00px;width:128.0px;height:16px"><span class="t" style="left:1.60px;top:0;line-height:16px;font-size:12px;letter-spacing:-0.204px;color:#000">ADC_SingleContinuousM</span></div>
<span class="t" style="left:3.90px;top:81.00px;line-height:16px;font-size:12px;letter-spacing:-0.266px;color:#3b3b3b;">Project</span>
<span class="t" style="left:45.40px;top:103.00px;line-height:16px;font-size:12px;letter-spacing:-0.044px;color:#000;">Project: ADC_SingleContinuousMode</span>
<span class="t" style="left:65.90px;top:123.00px;line-height:16px;font-size:12px;letter-spacing:-0.066px;color:#000;">ADC_SingleContinuousMode</span>
<span class="t" style="left:85.90px;top:143.00px;line-height:16px;font-size:12px;letter-spacing:0.191px;color:#000;">Application/MDK-ARM</span>
<span class="t" style="left:85.90px;top:163.00px;line-height:16px;font-size:12px;letter-spacing:-0.703px;color:#000;">CMSIS</span>
<span class="t" style="left:85.90px;top:183.00px;line-height:16px;font-size:12px;letter-spacing:0.133px;color:#000;">Application/User</span>
<span class="t" style="left:106.40px;top:203.00px;line-height:16px;font-size:12px;letter-spacing:0.109px;color:#000;">main.c</span>
<span class="t" style="left:106.40px;top:223.00px;line-height:16px;font-size:12px;letter-spacing:-0.282px;color:#000;">stm32f4xx_it.c</span>
<span class="t" style="left:106.40px;top:243.00px;line-height:16px;font-size:12px;letter-spacing:-0.345px;color:#000;">stm32f4xx_hal_msp.c</span>
<span class="t" style="left:85.90px;top:263.00px;line-height:16px;font-size:12px;letter-spacing:-0.400px;color:#000;">Drivers/STM32F4xx_HAL_Driver</span>
<span class="t" style="left:85.90px;top:283.00px;line-height:16px;font-size:12px;letter-spacing:-0.315px;color:#000;">Drivers/CMSIS</span>
<span class="t" style="left:23.60px;top:563.00px;line-height:16px;font-size:12px;letter-spacing:-0.308px;color:#000;">Project</span>
<span class="t" style="left:88.70px;top:563.00px;line-height:16px;font-size:12px;letter-spacing:-0.232px;color:#8a8a8a;">Books</span>
<span class="t" style="left:149.90px;top:563.00px;line-height:16px;font-size:12px;letter-spacing:-0.206px;color:#8a8a8a;">Functio...</span>
<span class="t" style="left:222.70px;top:563.00px;line-height:16px;font-size:12px;letter-spacing:-0.333px;color:#8a8a8a;">Templat...</span>
<span class="t" style="left:331.40px;top:84.00px;line-height:16px;font-size:12px;letter-spacing:-0.503px;color:#000;font-weight:700;">main.c</span>
<span class="t" style="left:408.40px;top:84.00px;line-height:16px;font-size:12px;letter-spacing:-0.512px;color:#000;">stm32f4xx_hal_adc.c</span>
</body></html>
